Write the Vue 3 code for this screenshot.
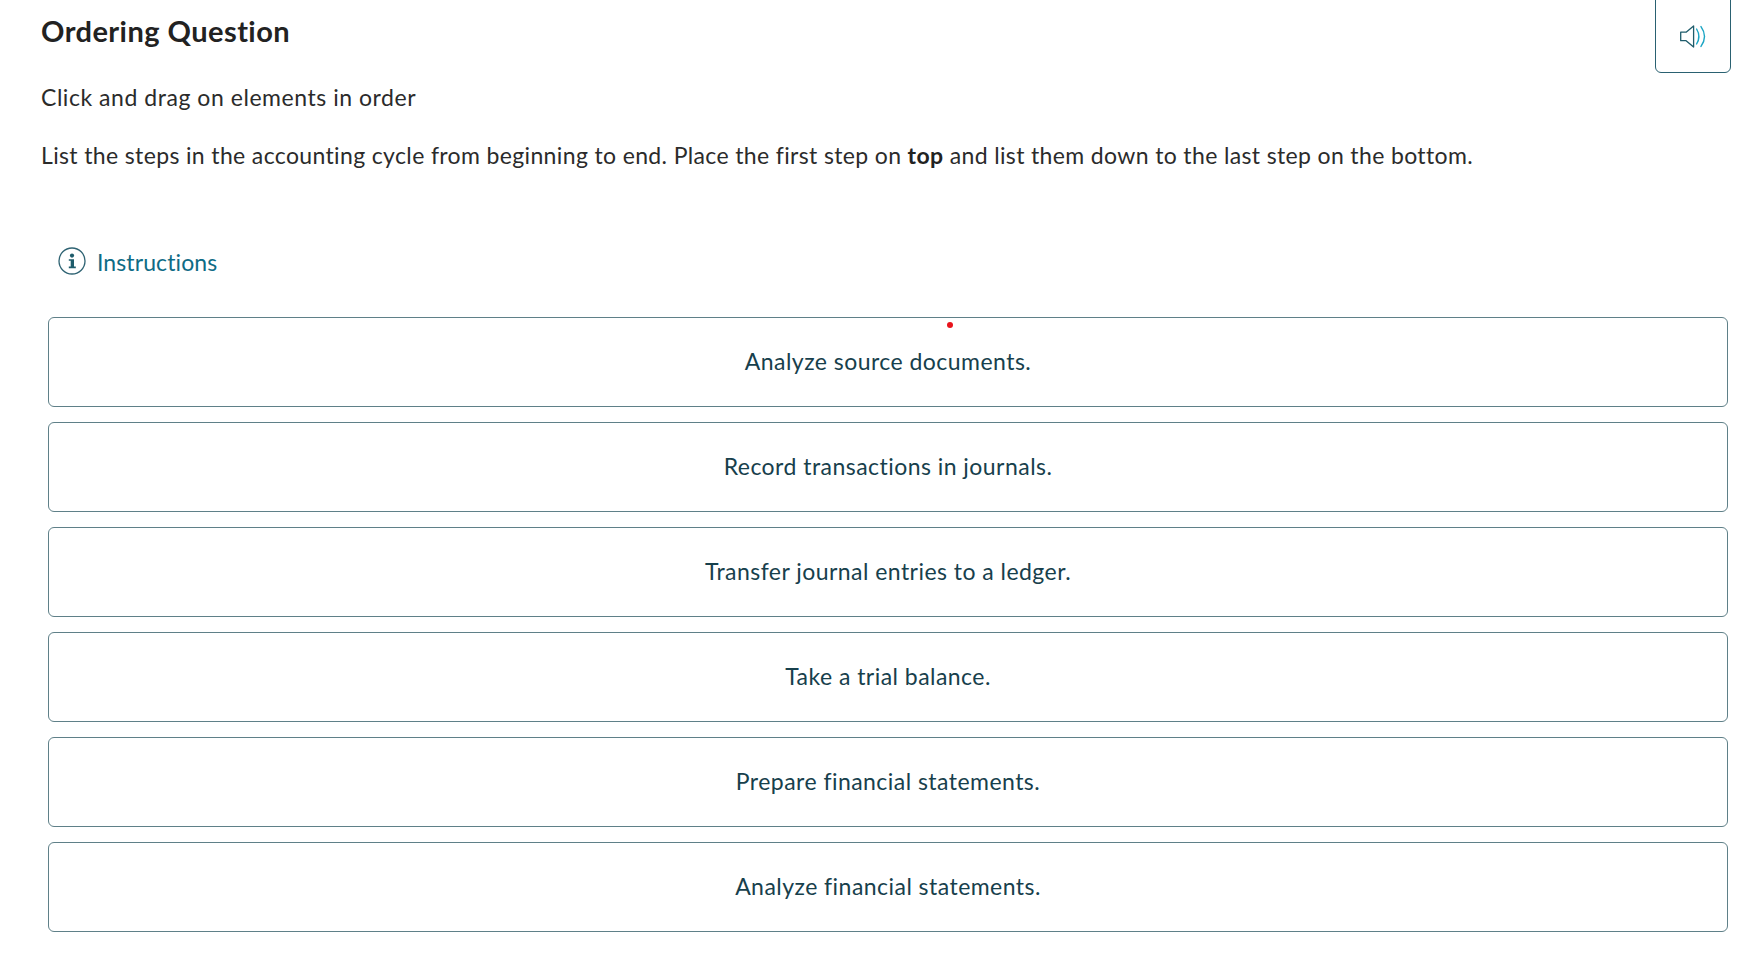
<script setup>
const items = [
  'Analyze source documents.',
  'Record transactions in journals.',
  'Transfer journal entries to a ledger.',
  'Take a trial balance.',
  'Prepare financial statements.',
  'Analyze financial statements.'
]
</script>

<template>
  <main class="page">
    <header class="head">
      <h1 class="title">Ordering Question</h1>
      <button class="audio" type="button" aria-label="Read aloud">
        <svg width="27" height="23" viewBox="0 0 27 23" fill="none">
          <path d="M.7 7.2h5.4L13.6 1v21l-7.5-6.3H.7z" stroke="#1f5c6b" stroke-width="1.3" stroke-linejoin="round" />
          <path d="M16.6 4c2.8 4.6 2.8 10.4 0 15" stroke="#1ba5c4" stroke-width="1.4" stroke-linecap="round" />
          <path d="M21 1.6c4.4 6.2 4.4 13.6 0 19.8" stroke="#1ba5c4" stroke-width="1.4" stroke-linecap="round" />
        </svg>
      </button>
    </header>
    <p class="hint">Click and drag on elements in order</p>
    <p class="prompt">List the steps in the accounting cycle from beginning to end. Place the first step on <strong>top</strong> and list them down to the last step on the bottom.</p>
    <div class="instructions">
      <svg class="info" width="28" height="28" viewBox="0 0 28 28" fill="none">
        <circle cx="14" cy="14" r="13" stroke="#2f6373" stroke-width="1.3" />
        <circle cx="14" cy="8.6" r="2.1" fill="#1f5c6b" />
        <path d="M10.8 12.2h5.2v7.4h1.8v1.6h-7v-1.6h1.9v-5.8h-1.9z" fill="#1f5c6b" />
      </svg>
      <span>Instructions</span>
    </div>
    <ol class="list">
      <li v-for="(item, i) in items" :key="item" class="item">
        <i v-if="i === 0" class="dot"></i>
        {{ item }}
      </li>
    </ol>
  </main>
</template>

<style>
html, body { margin: 0; background: #fff; }
</style>

<style scoped>
.page {
  font-family: Lato, "Liberation Sans", sans-serif;
  font-size: 23px;
  color: #2b2b2b;
  padding: 0 21px 0 41px;
  height: 967px;
  box-sizing: border-box;
  overflow: hidden;
}
.head { display: flex; justify-content: space-between; align-items: flex-start; height: 73px; }
.title { margin: 14px 0 0; font-size: 29px; line-height: 34px; font-weight: 700; color: #222; letter-spacing: 0.45px; }
.audio {
  width: 76px; height: 84px; margin: -11px 0 0 0;
  padding: 11px 0 0; border: 1.5px solid #2a6171; border-radius: 6px;
  background: #fff; display: flex; align-items: center; justify-content: center;
}
.hint { margin: 9px 0 0; line-height: 30px; letter-spacing: 0.54px; }
.prompt { margin: 28px 0 0; line-height: 30px; white-space: nowrap; letter-spacing: 0.36px; }
.prompt strong { font-weight: 700; color: #222; }
.instructions {
  display: flex; align-items: center; gap: 11px;
  margin: 76px 0 0 17px; height: 32px; color: #0f6b85; letter-spacing: 0.1px;
}
.info { margin-top: -2px; }
.list {
  list-style: none; margin: 39px 0 0 7px; padding: 0;
  display: flex; flex-direction: column; gap: 15px; width: 1680px;
}
.item {
  position: relative; height: 90px; box-sizing: border-box; padding-bottom: 3px;
  border: 1.5px solid #5f8088; border-radius: 6px;
  display: flex; align-items: center; justify-content: center;
  color: #17404c; letter-spacing: 0.46px;
}
.dot {
  position: absolute; left: 898px; top: 4px;
  width: 6px; height: 6px; border-radius: 50%; background: #e8141c;
}
</style>
